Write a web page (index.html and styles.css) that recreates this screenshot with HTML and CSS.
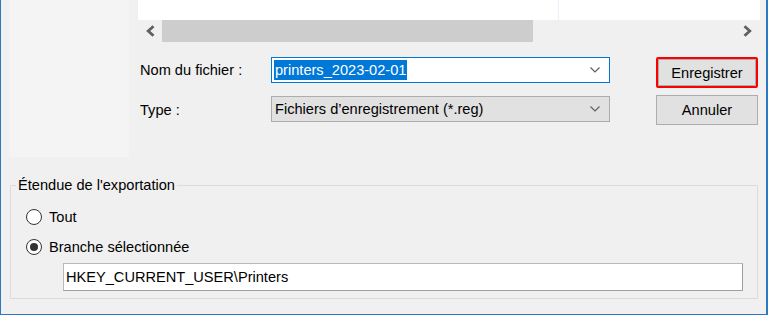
FILE: index.html
```html
<!DOCTYPE html>
<html lang="fr">
<head>
<meta charset="utf-8">
<title>Exporter le fichier du Registre</title>
<link rel="stylesheet" href="styles.css">
</head>
<body>
<div class="window">
  <div class="top">
    <div class="nav"></div>
    <div class="main">
      <div class="list"><div class="col"></div></div>
      <div class="hscroll">
        <div class="arrow">
          <svg width="10" height="12" viewBox="0 0 10 12"><path d="M8.5 1.2 L3.2 6 L8.5 10.8" fill="none" stroke="#606060" stroke-width="2.8"/></svg>
        </div>
        <div class="thumb"></div>
        <div class="track"></div>
        <div class="arrow">
          <svg width="10" height="12" viewBox="0 0 10 12"><path d="M1.5 1.2 L6.8 6 L1.5 10.8" fill="none" stroke="#606060" stroke-width="2.8"/></svg>
        </div>
      </div>
      <div class="form">
        <label class="lbl lbl1">Nom du fichier :</label>
        <div class="combo edit">
          <span class="sel">printers_2023-02-01</span>
          <svg class="chev" width="10" height="6" viewBox="0 0 10 6"><path d="M0.5 0.5 L5 5 L9.5 0.5" fill="none" stroke="#606060" stroke-width="1.2"/></svg>
        </div>
        <div class="btn primary">Enregistrer</div>
        <label class="lbl lbl2">Type :</label>
        <div class="combo drop">
          <span>Fichiers d’enregistrement (*.reg)</span>
          <svg class="chev" width="10" height="6" viewBox="0 0 10 6"><path d="M0.5 0.5 L5 5 L9.5 0.5" fill="none" stroke="#606060" stroke-width="1.2"/></svg>
        </div>
        <div class="btn cancel">Annuler</div>
      </div>
    </div>
  </div>
  <fieldset class="group">
    <legend>Étendue de l'exportation</legend>
    <div class="radio first"><span class="dot"></span><span>Tout</span></div>
    <div class="radio"><span class="dot on"></span><span>Branche sélectionnée</span></div>
    <div class="path">HKEY_CURRENT_USER\Printers</div>
  </fieldset>
</div>
</body>
</html>
```
FILE: styles.css
```css
* { box-sizing: border-box; }
html, body { margin: 0; padding: 0; }
body {
  width: 768px;
  height: 315px;
  overflow: hidden;
  background: #f0f0f0;
  font-family: "Liberation Sans", Arial, sans-serif;
  font-size: 14.6px;
  color: #000;
}
.window {
  width: 768px;
  height: 315px;
  background: #f0f0f0;
  border-left: 1px solid #2b79c2;
  border-right: 2px solid #2b79c2;
  border-bottom: 1px solid #2b79c2;
}
.top {
  display: flex;
  height: 157px;
}
.nav {
  flex: none;
  width: 120px;
  margin-left: 8px;
  background: #f4f4f4;
}
.main {
  flex: 1;
  min-width: 0;
  padding-left: 9px;
  padding-right: 6px;
}
.list {
  height: 20px;
  background: #fff;
}
.list .col {
  width: 421px;
  height: 20px;
  border-right: 1px solid #eaf1fa;
}
.hscroll {
  display: flex;
  height: 22px;
  background: #f0f0f0;
}
.arrow {
  flex: none;
  width: 24px;
  display: flex;
  align-items: center;
  justify-content: center;
}
.thumb {
  flex: none;
  width: 371px;
  background: #cdcdcd;
}
.track { flex: 1; }
.form {
  display: grid;
  grid-template-columns: 131px 339px 46px 102px;
  grid-template-rows: 31px 30px;
  row-gap: 7px;
  margin-top: 15px;
  padding-left: 2px;
}
.lbl {
  grid-column: 1;
  align-self: start;
  line-height: 16px;
}
.lbl1 { margin-top: 5px; }
.lbl2 { margin-top: 7px; }
.combo {
  grid-column: 2;
  height: 26px;
  display: flex;
  align-items: center;
  justify-content: space-between;
  padding: 0 9px 0 2px;
}
.edit {
  background: #fff;
  border: 1px solid #0078d7;
}
.sel {
  background: #0078d7;
  color: #fff;
  padding: 1px 1px;
  line-height: 18px;
}
.drop {
  margin-top: 1px;
  background: #e1e1e1;
  border: 1px solid #adadad;
}
.drop span { padding-left: 1px; }
.chev { flex: none; }
.btn {
  grid-column: 4;
  display: flex;
  align-items: center;
  justify-content: center;
  background: #e1e1e1;
  border: 1px solid #adadad;
  color: #000;
}
.primary {
  border: 2px solid #ff0000;
  border-radius: 2px;
  box-shadow: inset 0 0 0 1px #adadad;
}
.cancel { height: 30px; }
.group {
  margin: 20px 8px 0 9px;
  padding: 6px 0 6px 15px;
  border: 1px solid #dcdcdc;
  height: 122px;
}
.group legend {
  padding: 0 2px;
  margin-left: -10px;
  line-height: 16px;
}
.radio {
  display: flex;
  align-items: center;
  height: 30px;
  gap: 7px;
}
.radio.first { margin-top: 3px; }
.dot {
  flex: none;
  width: 16px;
  height: 16px;
  border-radius: 50%;
  border: 1px solid #333;
  background: #fff;
  display: flex;
  align-items: center;
  justify-content: center;
}
.dot.on::after {
  content: "";
  width: 8px;
  height: 8px;
  border-radius: 50%;
  background: #333;
}
.path {
  margin: 1px 14px 0 37px;
  height: 28px;
  background: #fff;
  border: 1px solid #b9b9b9;
  border-right-color: #a0a0a0;
  border-bottom-color: #a0a0a0;
  display: flex;
  align-items: center;
  padding-left: 2px;
}
```
